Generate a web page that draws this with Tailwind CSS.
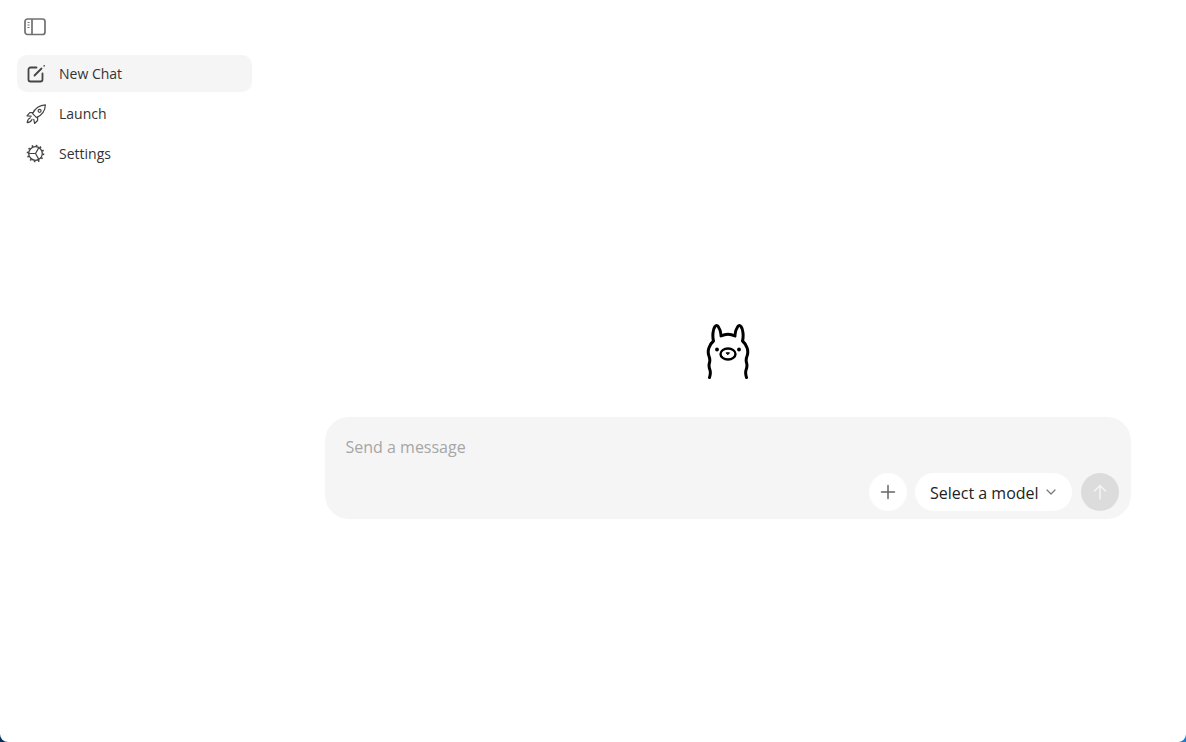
<!DOCTYPE html>
<html lang="en">
  <head>
    <meta charset="UTF-8" />
    <meta name="viewport" content="width=device-width, initial-scale=1.0" />
    <title>Ollama</title>
    <script src="https://cdn.jsdelivr.net/npm/@tailwindcss/browser@4"></script>
  </head>

  <body class="h-[742px] overflow-hidden bg-gradient-to-r from-[#06305c] to-[#1f78c8] font-['Open_Sans','Noto_Sans',sans-serif]">
    <div class="flex h-full rounded-b-[8px] bg-white">
      <!-- Sidebar -->
      <aside class="flex w-[270px] shrink-0 flex-col pl-[17px] pr-[18px]">
        <div class="flex h-[55px] items-center pl-[7px]">
          <svg class="size-[22px] -mt-[1px] text-[#707070]" viewBox="0 0 22 22" fill="none" stroke="currentColor" stroke-width="1.7">
            <rect x="1" y="3" width="20" height="15.5" rx="2.5" />
            <path d="M8 3v15.5" />
            <path d="M3.500 6.500h2M3.500 9h2M3.500 11.500h2" stroke-width="1" />
          </svg>
        </div>
        <nav class="flex flex-col gap-[3px] text-[14px] text-[#333]">
          <a class="flex h-[37px] items-center gap-[13px] rounded-[10px] bg-[#f5f5f5] pl-[9px]">
            <svg class="size-[20px] text-[#444]" viewBox="0 0 20 20" fill="none" stroke="currentColor" stroke-width="1.800" stroke-linecap="round" stroke-linejoin="round">
              <path d="M10.500 3.500H4.500a2 2 0 0 0-2 2v10a2 2 0 0 0 2 2h10a2 2 0 0 0 2-2V9.500" />
              <path d="M8.500 11.500 15.500 4.500" />
              <path d="M18 2.100 18.300 1.800" stroke-width="1.400" />
            </svg>
            <span>New Chat</span>
          </a>
          <a class="flex h-[37px] items-center gap-[13px] pl-[9px]">
            <svg class="size-[20px] text-[#444]" viewBox="0 0 20 20" fill="none" stroke="currentColor" stroke-width="1.200" stroke-linecap="round" stroke-linejoin="round">
              <path d="M6.600 9.600C8.800 4.800 13.500 1 19.400.8c-.2 6-4 10.600-8.800 12.800Z" />
              <circle cx="13.600" cy="6.800" r="1.500" />
              <path d="M7 8.600H3.800L1 11.800l4.200.4" />
              <path d="M11.600 13.200v3.300l-3 3-.8-4.200" />
              <path d="M4.400 13.800c-1.800.8-2.900 2.400-3.200 4.800 2.400-.2 4-1.300 4.800-3.200" />
            </svg>
            <span>Launch</span>
          </a>
          <a class="flex h-[37px] items-center gap-[13px] pl-[9px]">
            <svg class="size-[20px] text-[#444]" viewBox="0 0 20 20" fill="none" stroke="currentColor">
              <circle cx="9.500" cy="9.500" r="6.800" stroke-width="1.300" />
              <circle cx="9.500" cy="9.500" r="7.900" stroke-width="1.800" stroke-dasharray="1.600 2.540" />
              <path d="M9.500 9.500H3M9.500 9.500l3.200 5.600M9.500 9.500l3.200-5.600" stroke-width="1.200" />
            </svg>
            <span>Settings</span>
          </a>
        </nav>
      </aside>

      <!-- Main -->
      <main class="flex flex-1 flex-col items-center px-[55px] pt-[323px]">
        <svg class="h-[56px] w-[44px]" viewBox="0 0 44 56" fill="none" stroke="#000" stroke-width="3" stroke-linecap="round" stroke-linejoin="round">
          <path d="M3.500 54.500C4.700 51 4.700 49 3.800 46.500 2.900 44 2.700 42 3.500 39.500 4.300 37 3.800 35 2.800 32.500 1.300 28 2.800 22 7.500 18 6.200 13 7 6 9 3.500 10 2 11.200 2 12.200 3.500 14.200 6.500 15.200 10 15 13 20 10.500 24 10.500 29 13 28.800 10 29.800 6.500 31.800 3.500 32.800 2 34 2 35 3.500 37 6 37.800 13 36.500 18 41.200 22 42.700 28 41.200 32.500 40.200 35 39.700 37 40.500 39.500 41.300 42 41.100 44 40.200 46.500 39.300 49 39.300 51 40.500 54.500" />
          <ellipse cx="22" cy="31" rx="7.500" ry="5.500" stroke-width="2.400" />
          <path d="M20.500 29.800h3L22 31.500Z" fill="#000" stroke-width="1" />
          <circle cx="11" cy="26.500" r="1.900" fill="#000" stroke="none" />
          <circle cx="33" cy="26.500" r="1.900" fill="#000" stroke="none" />
        </svg>

        <!-- Composer -->
        <div class="mt-[38px] flex h-[102px] w-full flex-col justify-between rounded-[24px] bg-[#f5f5f5] pb-[8px] pl-[21px] pr-[12px] pt-[18px]">
          <p class="-ml-[0.5px] text-[16px] leading-[25px] text-[#a6a6a6]">Send a message</p>
          <div class="flex items-center justify-end gap-[8px]">
            <button class="flex size-[38px] items-center justify-center rounded-full bg-white">
              <svg class="size-[16px] text-[#666]" viewBox="0 0 16 16" fill="none" stroke="currentColor" stroke-width="1.500" stroke-linecap="round">
                <path d="M8 1.500v13M1.500 8h13" />
              </svg>
            </button>
            <button class="flex h-[38px] w-[157px] items-center gap-[7px] rounded-full bg-white pl-[15px] text-[16px] text-[#222]">
              <span class="pt-[2px]">Select a model</span>
              <svg class="size-[10px] text-[#777]" viewBox="0 0 10 10" fill="none" stroke="currentColor" stroke-width="1.200" stroke-linecap="round" stroke-linejoin="round">
                <path d="M1 3l4 4 4-4" />
              </svg>
            </button>
            <button class="ml-[1px] flex size-[38px] items-center justify-center rounded-full bg-[#dcdcdc]">
              <svg class="size-[16px] text-[#f4f4f4]" viewBox="0 0 16 16" fill="none" stroke="currentColor" stroke-width="1.500" stroke-linecap="round" stroke-linejoin="round">
                <path d="M8 15V1.500M2.500 7 8 1.500 13.500 7" />
              </svg>
            </button>
          </div>
        </div>
      </main>
    </div>
  </body>
</html>
